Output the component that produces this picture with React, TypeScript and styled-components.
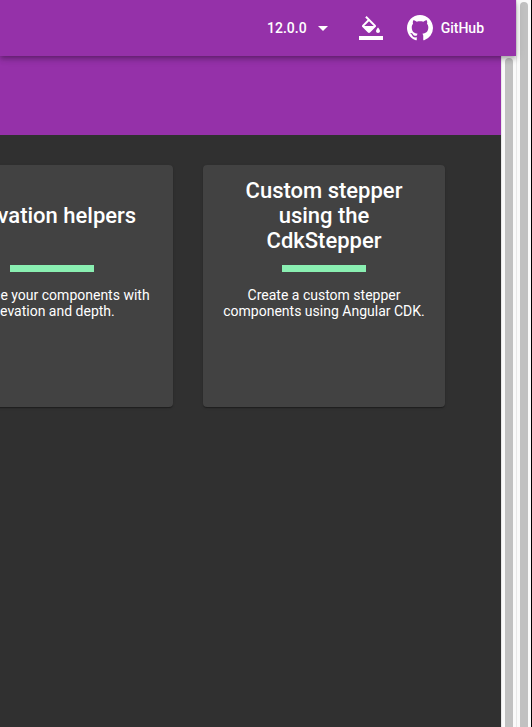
import styled, { createGlobalStyle } from 'styled-components';

const GlobalStyle = createGlobalStyle`
  html,
  body {
    margin: 0;
    height: 100%;
    overflow: hidden;
    background: #303030;
    font-family: Roboto, "Liberation Sans", sans-serif;
  }
`;

const Window = styled.div`
  display: flex;
  width: 532px;
  height: 727px;
  overflow: hidden;
  border-right: 1px solid #000;
  box-sizing: border-box;
`;

const Main = styled.div`
  display: flex;
  flex-direction: column;
  width: 516px;
  flex-shrink: 0;
`;

const Toolbar = styled.header`
  position: relative;
  z-index: 2;
  display: flex;
  align-items: center;
  justify-content: flex-end;
  height: 56px;
  flex-shrink: 0;
  padding-right: 32px;
  box-sizing: border-box;
  background: #9531a9;
  color: #fff;
  box-shadow: 0 2px 4px -1px rgba(0, 0, 0, 0.2), 0 4px 5px 0 rgba(0, 0, 0, 0.14), 0 1px 10px 0 rgba(0, 0, 0, 0.12);
`;

const VersionButton = styled.div`
  display: flex;
  align-items: center;
  font-size: 14px;
  font-weight: 500;
  margin-right: 31px;
`;

const Caret = styled.span`
  width: 0;
  height: 0;
  margin-left: 11px;
  border-left: 5px solid transparent;
  border-right: 5px solid transparent;
  border-top: 5px solid #fff;
`;

const ThemeIcon = styled.svg`
  width: 24px;
  height: 24px;
  margin-right: 24px;
`;

const GithubLink = styled.div`
  display: flex;
  align-items: center;
  gap: 8px;
  font-size: 14px;
  font-weight: 500;
`;

const GithubIcon = styled.svg`
  width: 26px;
  height: 26px;
`;

const Body = styled.div`
  display: flex;
  flex: 1;
  min-height: 0;
`;

const Page = styled.main`
  width: 501px;
  flex-shrink: 0;
  overflow: hidden;
`;

const Banner = styled.div`
  height: 79px;
  background: #9531a9;
`;

const CardRow = styled.div`
  display: flex;
  justify-content: flex-end;
  gap: 30px;
  padding: 30px 56px 0 0;
`;

const Card = styled.article`
  display: flex;
  flex-direction: column;
  align-items: center;
  width: 242px;
  height: 242px;
  flex-shrink: 0;
  padding: 13px 16px 0;
  box-sizing: border-box;
  border-radius: 4px;
  background: #424242;
  color: #fff;
  text-align: center;
  box-shadow: 0 2px 1px -1px rgba(0, 0, 0, 0.2), 0 1px 1px 0 rgba(0, 0, 0, 0.14), 0 1px 3px 0 rgba(0, 0, 0, 0.12);
`;

const CardTitle = styled.h2`
  display: flex;
  align-items: center;
  height: 75px;
  max-width: 180px;
  margin: 0;
  font-size: 22px;
  line-height: 25px;
  font-weight: 500;
`;

const Accent = styled.div`
  width: 84px;
  height: 7px;
  flex-shrink: 0;
  margin: 12px 0 15px;
  background: #8aefb2;
`;

const CardText = styled.p`
  margin: 0;
  font-size: 14px;
  line-height: 16px;
`;

const Track = styled.div`
  display: flex;
  justify-content: center;
  width: 15px;
  height: 100%;
  flex-shrink: 0;
  padding-top: 2px;
  box-sizing: border-box;
  background: #fafafa;
  border-left: 1px solid #e8e8e8;
`;

const Thumb = styled.div`
  flex: 0 0 8px;
  border-radius: 4px 4px 0 0;
  background: #c1c1c1;
`;

const cards = [
  { id: 'elevation', title: 'Elevation helpers', text: 'Enhance your components with elevation and depth.' },
  { id: 'stepper', title: 'Custom stepper using the CdkStepper', text: 'Create a custom stepper components using Angular CDK.' },
];

export default function App() {
  return (
    <>
      <GlobalStyle />
      <Window>
        <Main>
          <Toolbar>
            <VersionButton>
              12.0.0
              <Caret />
            </VersionButton>
            <ThemeIcon viewBox="0 0 24 24" fill="#fff">
              <path d="M16.56 8.94 7.62 0 6.21 1.41l2.38 2.38-5.15 5.15c-.59.59-.59 1.54 0 2.12l5.5 5.5c.29.29.68.44 1.06.44s.77-.15 1.06-.44l5.5-5.5c.59-.58.59-1.53 0-2.12zM5.21 10 10 5.21 14.79 10H5.21zM19 11.5s-2 2.17-2 3.5c0 1.1.9 2 2 2s2-.9 2-2c0-1.33-2-3.5-2-3.5z" />
              <path d="M0 20h24v4H0z" />
            </ThemeIcon>
            <GithubLink>
              <GithubIcon viewBox="0 0 16 16" fill="#fff">
                <path d="M8 0C3.58 0 0 3.58 0 8c0 3.54 2.29 6.53 5.47 7.59.4.07.55-.17.55-.38 0-.19-.01-.82-.01-1.49-2.01.37-2.53-.49-2.69-.94-.09-.23-.48-.94-.82-1.13-.28-.15-.68-.52-.01-.53.63-.01 1.08.58 1.23.82.72 1.21 1.87.87 2.33.66.07-.52.28-.87.51-1.07-1.78-.2-3.64-.89-3.64-3.95 0-.87.31-1.59.82-2.15-.08-.2-.36-1.02.08-2.12 0 0 .67-.21 2.2.82.64-.18 1.32-.27 2-.27s1.36.09 2 .27c1.53-1.04 2.2-.82 2.2-.82.44 1.1.16 1.92.08 2.12.51.56.82 1.27.82 2.15 0 3.07-1.87 3.75-3.65 3.95.29.25.54.73.54 1.48 0 1.07-.01 1.93-.01 2.2 0 .21.15.46.55.38A8.01 8.01 0 0 0 16 8c0-4.42-3.58-8-8-8z" />
              </GithubIcon>
              GitHub
            </GithubLink>
          </Toolbar>
          <Body>
            <Page>
              <Banner />
              <CardRow>
                {cards.map((card) => (
                  <Card key={card.id}>
                    <CardTitle>{card.title}</CardTitle>
                    <Accent />
                    <CardText>{card.text}</CardText>
                  </Card>
                ))}
              </CardRow>
            </Page>
            <Track>
              <Thumb />
            </Track>
          </Body>
        </Main>
        <Track>
          <Thumb />
        </Track>
      </Window>
    </>
  );
}
